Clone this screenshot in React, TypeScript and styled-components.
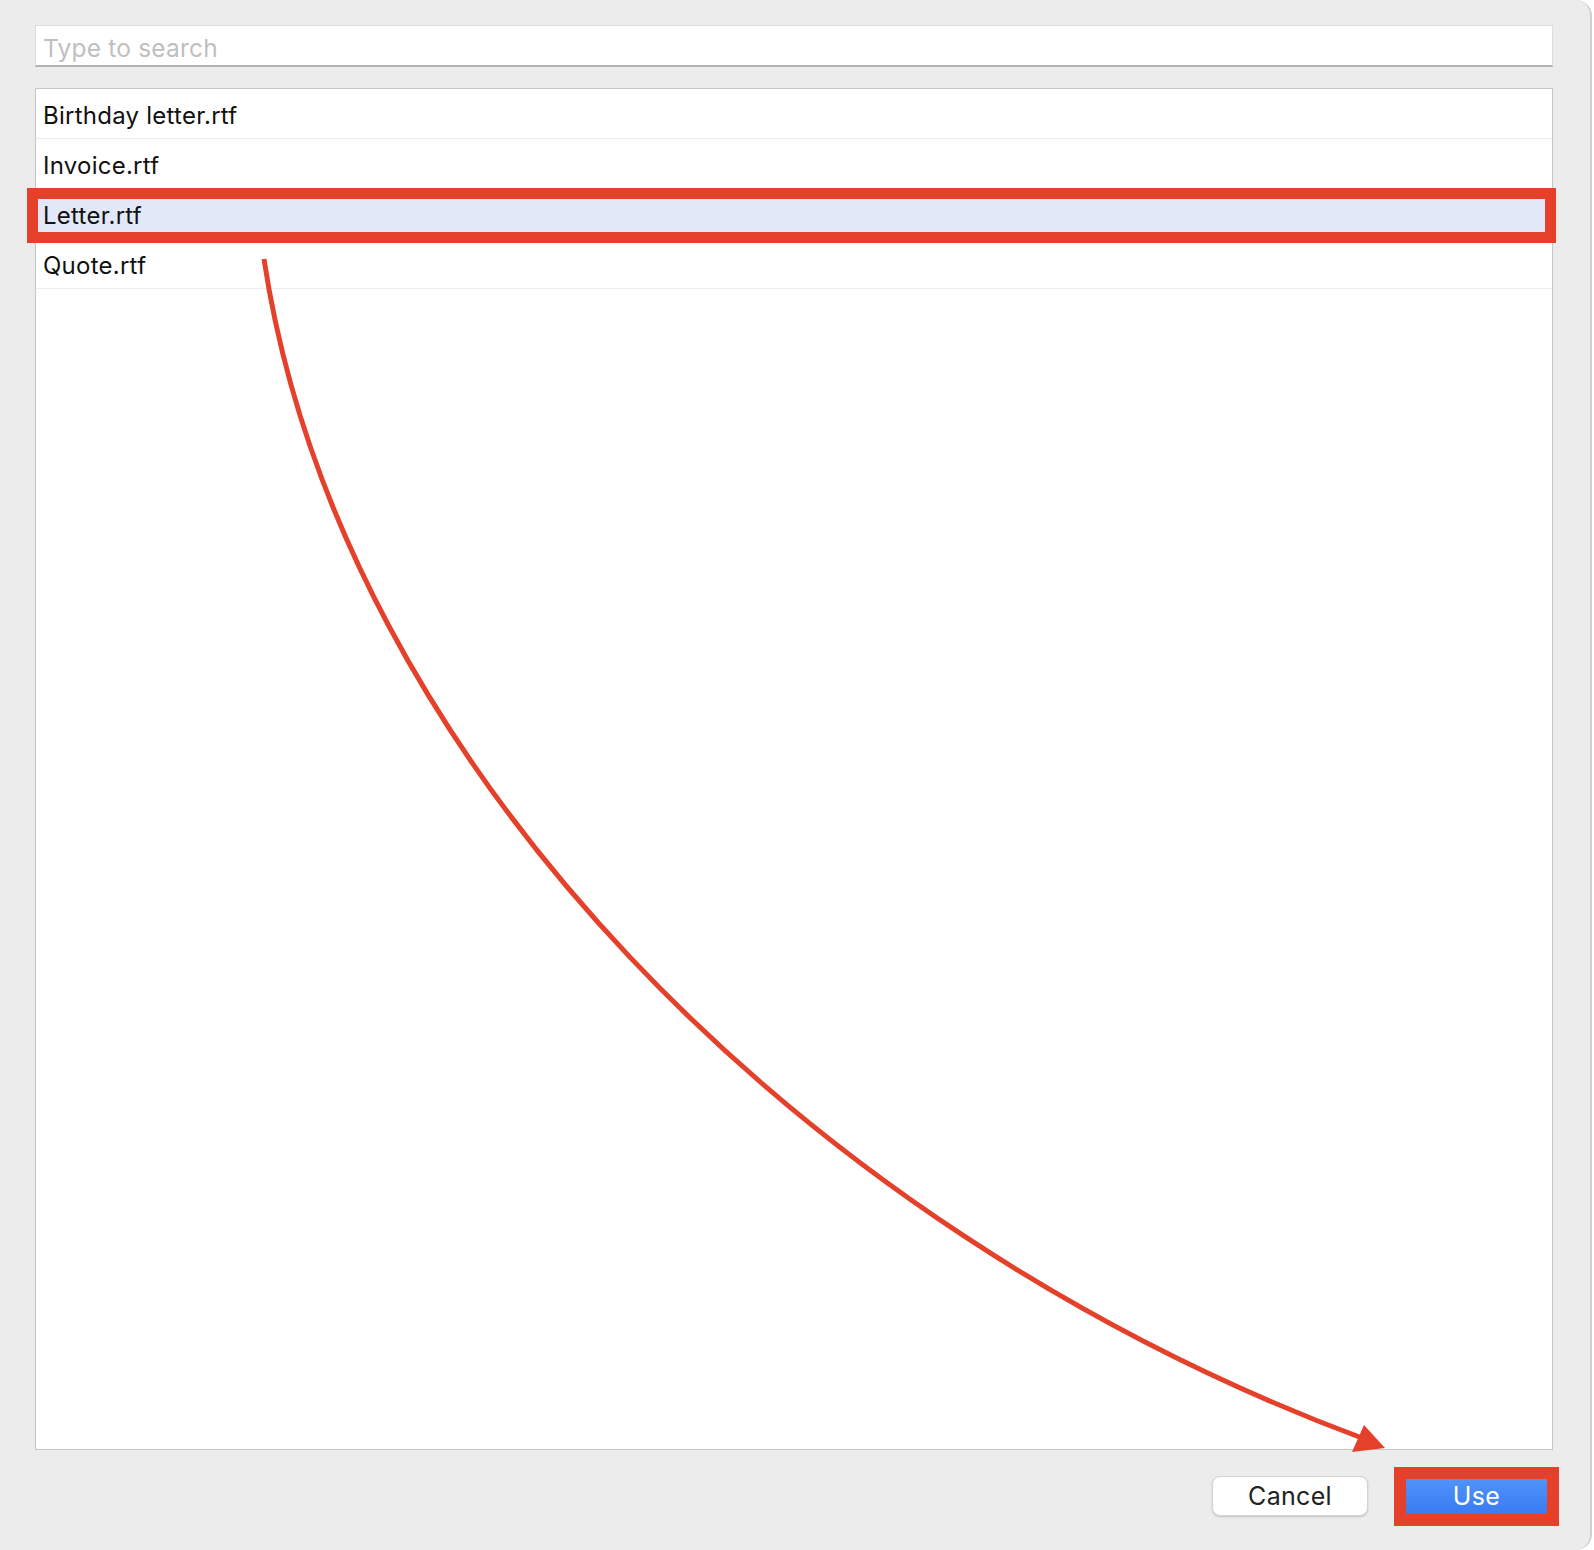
import React, { FC, useState } from "react";
import styled, { createGlobalStyle } from "styled-components";

const files = ["Birthday letter.rtf", "Invoice.rtf", "Letter.rtf", "Quote.rtf"];

const RED = "#e4402a";

const App: FC = () => {
  const [selected, setSelected] = useState("Letter.rtf");

  return (
    <>
      <GlobalStyle />
      <Window>
        <SearchField placeholder="Type to search" />
        <FileList>
          {files.map((name) => (
            <FileRow
              key={name}
              $selected={name === selected}
              onClick={() => setSelected(name)}
            >
              {name}
            </FileRow>
          ))}
        </FileList>
        <ButtonBar>
          <CancelButton>Cancel</CancelButton>
          <UseButton>Use</UseButton>
        </ButtonBar>

        {/* annotation arrow drawn over the dialog */}
        <Annotation viewBox="0 0 1594 1550">
          <path
            d="M264 259 C339 759, 800 1229, 1362 1438"
            fill="none"
            stroke={RED}
            strokeWidth={5}
          />
          <polygon points="1385,1448 1352,1452 1364,1425" fill={RED} />
        </Annotation>
      </Window>
    </>
  );
};

const GlobalStyle = createGlobalStyle`
  html, body {
    margin: 0;
    padding: 0;
    background: #ffffff;
  }
  * {
    box-sizing: border-box;
  }
`;

const Window = styled.div`
  position: relative;
  width: 1592px;
  height: 1550px;
  display: flex;
  flex-direction: column;
  padding: 25px 37px 0 35px;
  background: #ececec;
  border-right: 2px solid #cfcfcf;
  border-radius: 0 16px 16px 0;
  font-family: Inter, "Liberation Sans", sans-serif;
  color: #111;
`;

const SearchField = styled.input`
  height: 42px;
  width: 100%;
  padding: 4px 0 0 7px;
  border: 1px solid #dcdcdc;
  border-bottom: 2px solid #b3b3b3;
  border-radius: 0;
  background: #fff;
  font-family: inherit;
  font-size: 24.5px;
  letter-spacing: 0.2px;
  color: #111;
  outline: none;

  &::placeholder {
    color: #bfbfbf;
  }
`;

const FileList = styled.div`
  flex: 1;
  margin-top: 21px;
  background: #fff;
  border: 1px solid #c6c6c6;
  overflow: visible;
`;

const FileRow = styled.div<{ $selected?: boolean }>`
  position: relative;
  height: 50px;
  display: flex;
  align-items: center;
  padding: 3px 0 0 7px;
  border-bottom: 1px solid #ececec;
  background: ${(p) => (p.$selected ? "#e2e8f8" : "#fff")};
  font-size: 24px;
  letter-spacing: 0.25px;
  cursor: default;

  &::after {
    content: "";
    display: ${(p) => (p.$selected ? "block" : "none")};
    position: absolute;
    top: -1px;
    left: -9px;
    right: -4px;
    bottom: -5px;
    border: 11px solid ${RED};
    z-index: 1;
  }
`;

const ButtonBar = styled.div`
  height: 100px;
  display: flex;
  justify-content: flex-end;
  align-items: center;
  align-self: stretch;
  gap: 38px;
  padding: 0 6px 8px 0;
`;

const CancelButton = styled.button`
  width: 156px;
  height: 40px;
  border: 1px solid #d4d4d4;
  border-radius: 8px;
  background: #fff;
  box-shadow: 0 1px 2px rgba(0, 0, 0, 0.18);
  font-family: inherit;
  font-size: 25px;
  letter-spacing: 0.3px;
  color: #222;
`;

const UseButton = styled.button`
  width: 141px;
  height: 35px;
  border: none;
  border-radius: 0;
  background: linear-gradient(#5093f9, #3a7bf2);
  outline: 12px solid ${RED};
  font-family: inherit;
  font-size: 25px;
  letter-spacing: 0.3px;
  color: #fff;
`;

const Annotation = styled.svg`
  position: absolute;
  top: 0;
  left: 0;
  width: 1594px;
  height: 1550px;
  pointer-events: none;
  z-index: 2;
`;

export default App;
